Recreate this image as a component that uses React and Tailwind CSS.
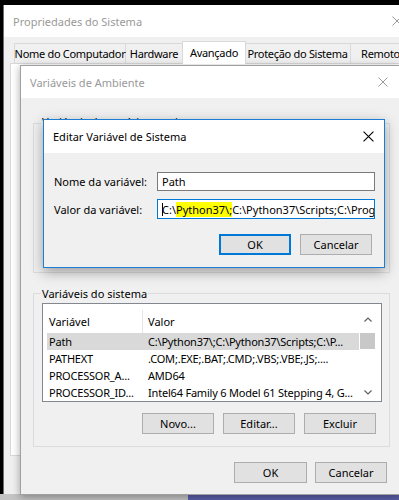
import React from 'react';

const XIcon = ({ className = '', size = 10 }) => (
  <svg width={size} height={size} viewBox="0 0 10 10" className={className}>
    <path d="M0.5 0.5 L9.5 9.5 M9.5 0.5 L0.5 9.5" stroke="currentColor" strokeWidth="1" fill="none" />
  </svg>
);

const Chevron = ({ up }) => (
  <svg width="8" height="5" viewBox="0 0 8 5" className="text-[#606060]">
    <path d={up ? 'M0.5 4.5 L4 1 L7.5 4.5' : 'M0.5 0.5 L4 4 L7.5 0.5'} stroke="currentColor" strokeWidth="1.2" fill="none" />
  </svg>
);

const Button = ({ children, w = 'w-[72px]', focused = false, h = 'h-[21px]' }) => (
  <div
    className={`${w} ${h} flex items-center justify-center bg-[#e1e1e1] ${
      focused ? 'border-2 border-[#0078d7]' : 'border border-[#adadad]'
    }`}
  >
    {children}
  </div>
);

const tabs = [
  { label: 'Nome do Computador', w: 'w-[112px]' },
  { label: 'Hardware', w: 'w-[57px]' },
  { label: 'Avançado', w: 'w-[64px]', active: true },
  { label: 'Proteção do Sistema', w: 'w-[106px]' },
  { label: 'Remoto', w: 'w-[60px]' },
];

const rows = [
  { name: 'Path', value: 'C:\\Python37\\;C:\\Python37\\Scripts;C:\\P...', selected: true },
  { name: 'PATHEXT', value: '.COM;.EXE;.BAT;.CMD;.VBS;.VBE;.JS;....' },
  { name: 'PROCESSOR_A...', value: 'AMD64' },
  { name: 'PROCESSOR_ID...', value: 'Intel64 Family 6 Model 61 Stepping 4, G...' },
];

export default function App() {
  return (
    <div className="relative w-[399px] h-[500px] overflow-hidden bg-black text-[11px] leading-[15px] text-black font-['Noto_Sans',sans-serif]">
      {/* desktop strip under the windows */}
      <div className="absolute left-0 top-[494px] w-[188px] h-[6px] bg-[#c4c4c4]" />
      <div className="absolute left-[188px] top-[494px] w-[211px] h-[6px] bg-[#5b5fa8]" />

      {/* Propriedades do Sistema */}
      <div className="absolute left-[3px] top-[5px] w-[412px] h-[489px] bg-[#f0f0f0] border-l border-[#6e6e6e] flex flex-col">
        <div className="h-[32px] shrink-0 bg-white flex items-center justify-between pl-[9px] pr-[13px] text-[#999999]">
          <span>Propriedades do Sistema</span>
          <XIcon />
        </div>
        <div className="mt-[4px] h-[22px] pl-[10px] flex items-end shrink-0">
          {tabs.map((t) => (
            <div
              key={t.label}
              className={`${t.w} flex items-center justify-center border border-b-0 ${
                t.active
                  ? 'h-[23px] bg-white border-[#d9d9d9] relative z-10 -mb-px -mx-[1px] pb-[2px]'
                  : 'h-[20px] bg-[#f0f0f0] border-[#d9d9d9] border-l-0 first:border-l'
              }`}
            >
              <span className="whitespace-nowrap tracking-[-0.3px]">{t.label}</span>
            </div>
          ))}
        </div>
        <div className="ml-[6px] h-[393px] bg-white border border-[#d9d9d9] shrink-0" />
      </div>

      {/* Variáveis de Ambiente */}
      <div className="absolute left-[20px] top-[65px] w-[380px] h-[430px] bg-[#f0f0f0] border border-[#a0a0a0] shadow-[0_2px_8px_rgba(0,0,0,0.35)] flex flex-col">
        <div className="h-[32px] shrink-0 bg-white flex items-center justify-between pl-[9px] pr-[11px] text-[#999999]">
          <span>Variáveis de Ambiente</span>
          <XIcon className="text-[#9a9a9a]" />
        </div>
        <div className="flex flex-col pl-[12px] pr-[9px]">
          <div className="mt-[25px] h-[150px] border border-[#dcdcdc] flex flex-col">
            <span className="-mt-[10px] ml-[7px] px-[1px] w-fit bg-[#f0f0f0]">Variáveis de usuário para joao</span>
          </div>

          <div className="mt-[20px] h-[154px] border border-[#dcdcdc] flex flex-col">
            <span className="-mt-[8px] ml-[7px] px-[1px] w-fit bg-[#f0f0f0]">Variáveis do sistema</span>
            <div className="mt-[2px] ml-[8px] w-[340px] h-[99px] bg-white border border-[#828790] flex">
              <div className="flex-1 flex flex-col min-w-0">
                <div className="h-[29px] pt-[6px] flex shrink-0">
                  <div className="w-[100px] pl-[6px] border-r border-[#e5e5e5] flex items-center">Variável</div>
                  <div className="pl-[5px] flex items-center">Valor</div>
                </div>
                {rows.map((r) => (
                  <div
                    key={r.name}
                    className={`h-[17.5px] ml-[4px] flex items-center whitespace-nowrap tracking-[-0.2px] ${
                      r.selected ? 'bg-[#d9d9d9]' : ''
                    }`}
                  >
                    <span className="w-[96px] pl-[2px] shrink-0">{r.name}</span>
                    <span className="pl-[5px]">{r.value}</span>
                  </div>
                ))}
              </div>
              <div className="w-[22px] shrink-0 flex flex-col pl-[1px]">
                <div className="h-[29px] w-[15px] flex items-center justify-center pt-[2px]">
                  <Chevron up />
                </div>
                <div className="h-[16px] w-[15px] bg-[#c8c8c8]" />
                <div className="flex-1" />
                <div className="h-[14px] w-[15px] flex items-center justify-center pb-[4px]">
                  <Chevron />
                </div>
              </div>
            </div>
            <div className="mt-[11px] pr-[13px] flex justify-end gap-[9px]">
              <Button>Novo...</Button>
              <Button>Editar...</Button>
              <Button>Excluir</Button>
            </div>
          </div>

          <div className="mt-[15px] pr-[3px] flex justify-end gap-[8px]">
            <Button w="w-[73px]">OK</Button>
            <Button>Cancelar</Button>
          </div>
        </div>
      </div>

      {/* Editar Variável de Sistema */}
      <div className="absolute left-[43px] top-[119px] w-[342px] h-[149px] bg-[#f0f0f0] border border-[#1a7fd4] shadow-[0_4px_12px_rgba(0,0,0,0.35)] flex flex-col">
        <div className="h-[33px] shrink-0 bg-white flex items-center justify-between pl-[9px] pr-[10px]">
          <span>Editar Variável de Sistema</span>
          <XIcon className="text-black" size={11} />
        </div>
        <div className="flex flex-col pl-[10px] pr-[9px] pt-[19px]">
          <div className="flex items-center h-[19px]">
            <span className="w-[103px] shrink-0">Nome da variável:</span>
            <div className="w-[218px] h-[19px] bg-white border border-[#7a7a7a] flex items-center pl-[4px]">Path</div>
          </div>
          <div className="flex items-center h-[20px] mt-[8px]">
            <span className="w-[103px] shrink-0">Valor da variável:</span>
            <div className="w-[218px] h-[20px] bg-white border border-[#0078d7] flex items-center pl-[4px] overflow-hidden whitespace-nowrap">
              <span className="w-px h-[13px] bg-black shrink-0 -mr-px" />
              <span>C:\</span>
              <span className="bg-[#ffff00]">Python37\;</span>
              <span>C:\Python37\Scripts;C:\Progr</span>
            </div>
          </div>
          <div className="mt-[15px] pr-[3px] flex justify-end gap-[9px]">
            <Button focused>OK</Button>
            <Button>Cancelar</Button>
          </div>
        </div>
      </div>
    </div>
  );
}
